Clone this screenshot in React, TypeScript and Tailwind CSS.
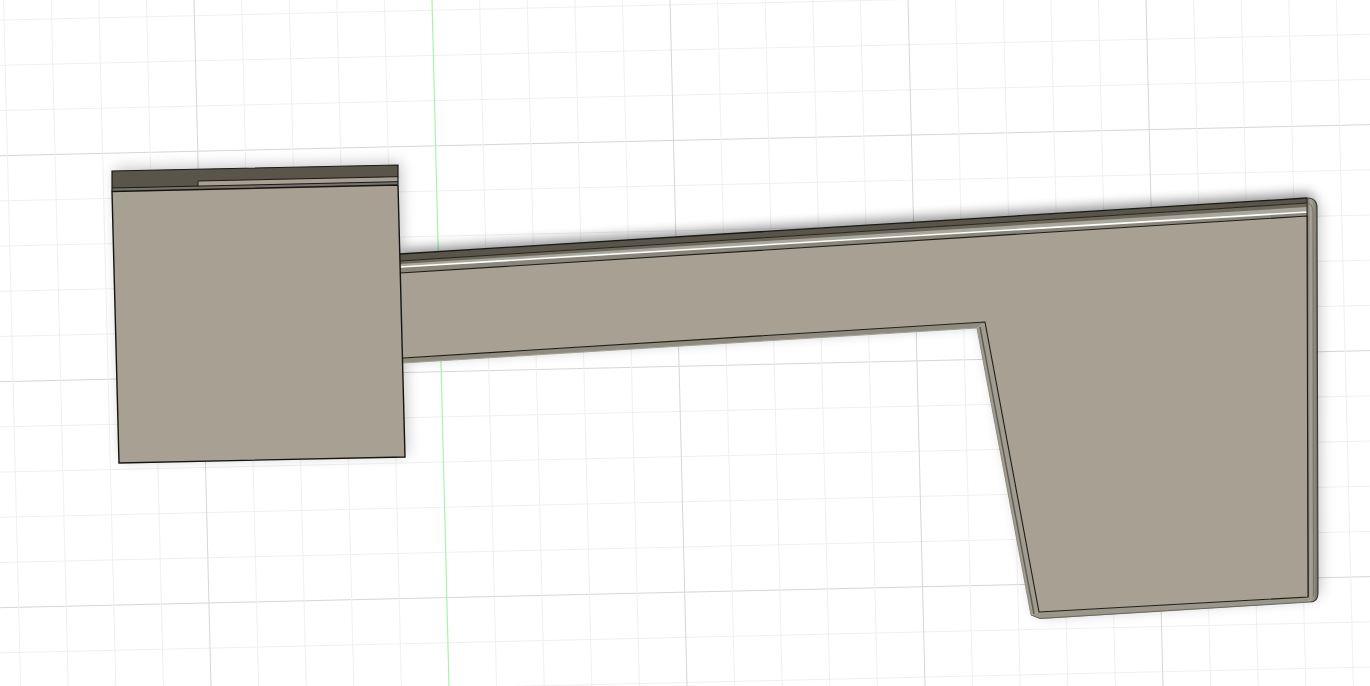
import React from 'react';

// grid is a straight-line projection of the CAD ground plane
const verticals = Array.from({ length: 29 }, (_, i) => i - 9);
const horizontals = Array.from({ length: 16 }, (_, i) => i - 3);

const silhouette =
  '112,171 398,165 400,254 1307,198 1317,208 1318,593 1310,602 1040,619 1032,615 978,328 403,363 405,457 119,463';

function Viewport() {
  return (
    <svg viewBox="0 0 1370 686" className="block w-full h-full">
      <defs>
        <filter id="occlusion" x="-10%" y="-20%" width="120%" height="140%">
          <feGaussianBlur stdDeviation="7" />
        </filter>
        <filter id="barShadow" x="-5%" y="-100%" width="110%" height="300%">
          <feGaussianBlur stdDeviation="6" />
        </filter>
        <linearGradient id="rightBand" x1="0" y1="0" x2="1" y2="0">
          <stop offset="0" stopColor="#6f6b5f" />
          <stop offset="0.3" stopColor="#a8a396" />
          <stop offset="0.7" stopColor="#8e8a7d" />
          <stop offset="1" stopColor="#6a665a" />
        </linearGradient>
      </defs>

      {/* grid */}
      {horizontals.map((k) => {
        const y = 155.7 + k * 45.2;
        return (
          <line
            key={`h${k}`}
            x1={0}
            y1={y}
            x2={1370}
            y2={y - 31.1}
            stroke={k % 5 === 0 ? '#d6d6d6' : '#f0f0f0'}
            strokeWidth={1}
          />
        );
      })}
      {verticals.map((k) => {
        const x = 432 + k * 47.6;
        if (k === 0) return null;
        return (
          <line
            key={`v${k}`}
            x1={x}
            y1={0}
            x2={x + 17}
            y2={686}
            stroke={k % 5 === 0 ? '#d6d6d6' : '#f0f0f0'}
            strokeWidth={1}
          />
        );
      })}
      <line x1={432} y1={0} x2={449} y2={686} stroke="#a6f5a6" strokeWidth={1.2} />

      {/* soft shadow */}
      <polygon points={silhouette} fill="#000" opacity={0.22} filter="url(#occlusion)" transform="translate(3 -3)" />
      <polygon points="400,250 1312,193 1312,215 400,270" fill="#000" opacity={0.3} filter="url(#barShadow)" />

      {/* left block top side */}
      <polygon points="112,171 398,165 398,185 112,192" fill="#59554a" />
      <polygon points="198,181 398,176.7 398,181.7 198,186.6" fill="#a8a193" />
      <polyline points="198,187 198,181 398,176.7" fill="none" stroke="#1a1a18" strokeWidth={1} />
      <polygon points="112,188 398,181.7 398,185 112,191.5" fill="#77736a" />
      <line x1={112} y1={188} x2={398} y2={181.7} stroke="#1a1a18" strokeWidth={1} />
      <polyline points="112,191 112,171 398,165 398,184" fill="none" stroke="#1a1a18" strokeWidth={1.2} />

      {/* bar top edge */}
      <polygon points="400,254 1307,198 1307,203 400,261" fill="#59554a" />
      <polygon points="400,261 1307,203 1307,216 400,273" fill="#8d897c" />
      <polygon points="400,261 1307,203 1307,212 400,267" fill="#6c685c" />
      <polygon points="400,264 1307,207 1307,212 400,267" fill="#a9a69b" />
      <polygon points="400,267 1307,212 1307,216 400,273" fill="#8a8679" />
      <line x1={400} y1={267} x2={1307} y2={212} stroke="#ffffff" strokeWidth={1.6} />
      <line x1={400} y1={254} x2={1307} y2={198} stroke="#1a1a18" strokeWidth={1.3} />
      <line x1={400} y1={261} x2={1307} y2={203} stroke="#26251f" strokeWidth={1} />

      {/* rounded right side */}
      <path d="M1307,198 Q1317,198 1317,208 L1318,593 Q1318,602 1310,602 L1308,597 L1307,216 Z" fill="url(#rightBand)" />
      <path d="M1307,203 Q1312,203 1313,211 L1313.6,596" fill="none" stroke="#6f6b5f" strokeWidth={0.8} />
      <path d="M1307,198 Q1317,198 1317,208 L1318,593 Q1318,602 1310,602" fill="none" stroke="#3a3833" strokeWidth={1.1} />
      <line x1={1307} y1={198} x2={1308} y2={597} stroke="#26251f" strokeWidth={1} />

      {/* bottom chamfer */}
      <polygon points="1040,619 1031,615 1039,612 1308,597 1310,602" fill="#9a9689" />
      <polyline points="1031,615 1040,618.5 1310,602" fill="none" stroke="#6a675e" strokeWidth={1} />

      {/* slanted chamfer */}
      <polygon points="985,322 1039,612 1031,615 977,328" fill="#a09c8f" />
      <line x1={980} y1={327} x2={1034} y2={614} stroke="#5f5b50" strokeWidth={1.4} />
      <line x1={977} y1={328} x2={1031} y2={615} stroke="#8f8b80" strokeWidth={1} />

      {/* bar underside chamfer */}
      <polygon points="403,358 985,322 977,328 403,363" fill="#8f8b7e" />
      <line x1={403} y1={363} x2={977} y2={328} stroke="#a3a094" strokeWidth={1} />

      {/* main faces */}
      <polygon points="400,273 1307,216 1308,597 1039,612 985,322 403,358" fill="#a8a193" />
      <polyline points="400,273 1307,216 1308,597 1039,612 985,322 403,358" fill="none" stroke="#1d1c19" strokeWidth={1.1} />

      <polygon points="112,191.5 398,185 405,457 119,463" fill="#a8a193" />
      <polygon points="112,191.5 398,185 405,457 119,463" fill="none" stroke="#141412" strokeWidth={1.4} />
    </svg>
  );
}

export default function App() {
  return (
    <div className="h-screen w-full overflow-hidden bg-white">
      <Viewport />
    </div>
  );
}
